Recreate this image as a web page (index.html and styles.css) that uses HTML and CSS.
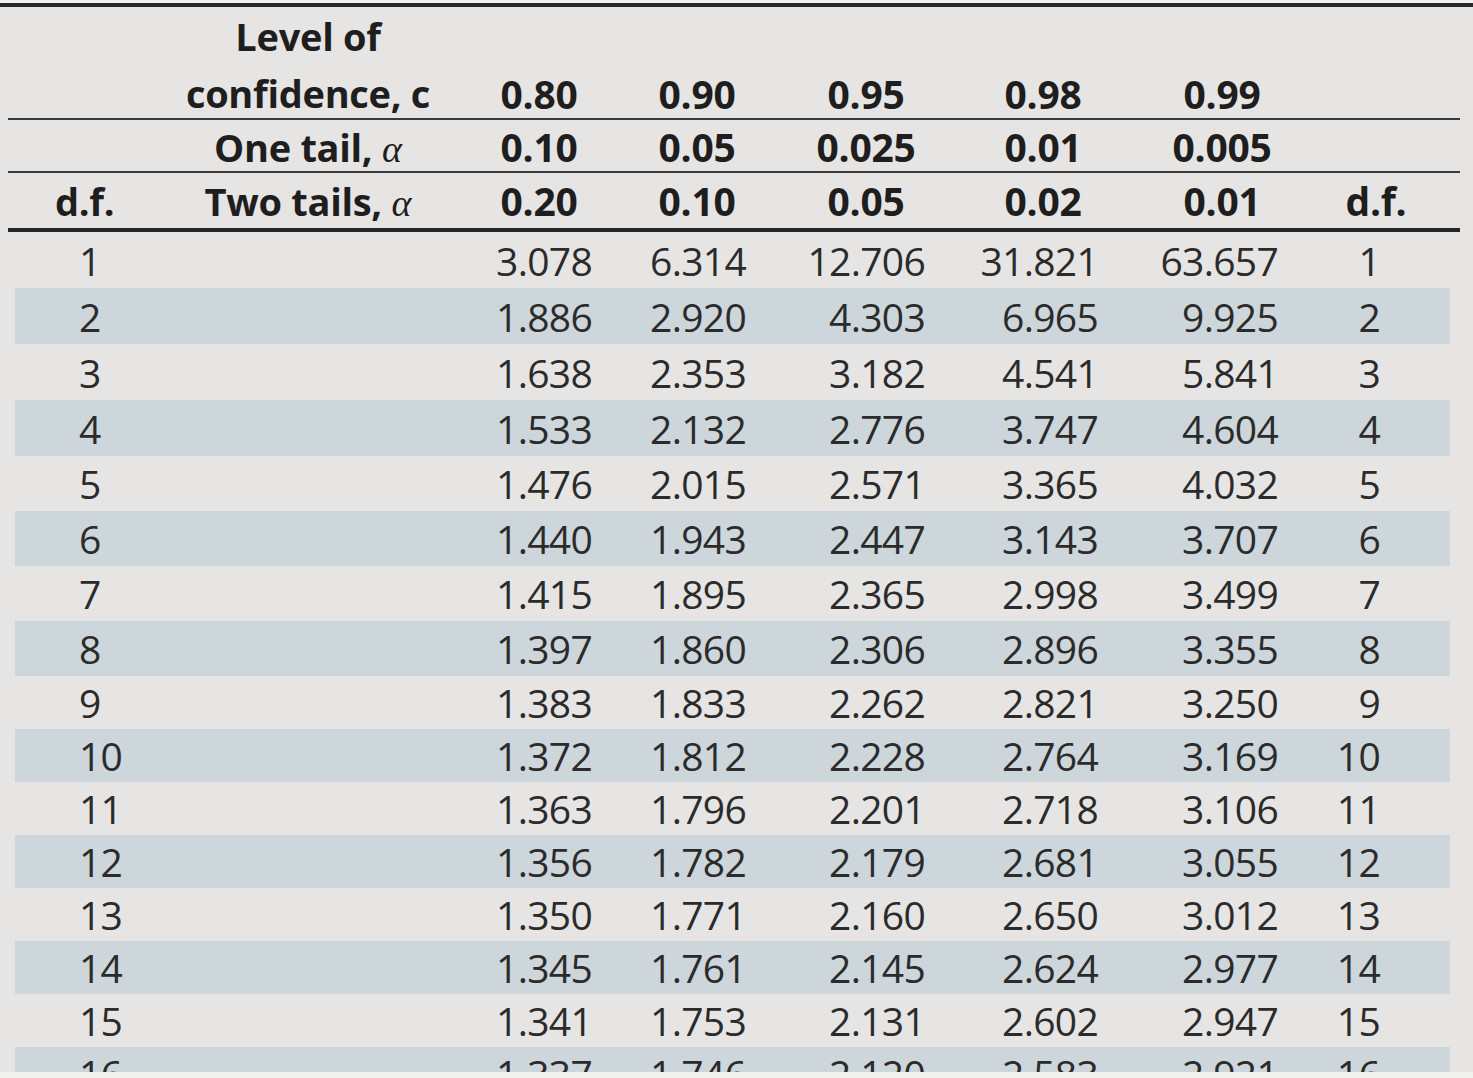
FILE: index.html
```html
<!DOCTYPE html>
<html lang="en">
<head>
<meta charset="utf-8">
<title>t-Distribution table</title>
<link rel="stylesheet" href="styles.css">
</head>
<body>
<div class="sheet">
  <div class="hrow h1">
    <div class="cell df-l"></div>
    <div class="cell label"><span>Level of<br>confidence, c</span></div>
    <div class="cell hn">0.80</div>
    <div class="cell hn">0.90</div>
    <div class="cell hn">0.95</div>
    <div class="cell hn">0.98</div>
    <div class="cell hn">0.99</div>
    <div class="cell"></div>
    <div class="cell"></div>
  </div>
  <div class="hrow h2">
    <div class="cell df-l"></div>
    <div class="cell label"><span>One tail, <span class="alpha">α</span></span></div>
    <div class="cell hn">0.10</div>
    <div class="cell hn">0.05</div>
    <div class="cell hn">0.025</div>
    <div class="cell hn">0.01</div>
    <div class="cell hn">0.005</div>
    <div class="cell"></div>
    <div class="cell"></div>
  </div>
  <div class="hrow h3">
    <div class="cell df-l hdf">d.f.</div>
    <div class="cell label"><span>Two tails, <span class="alpha">α</span></span></div>
    <div class="cell hn">0.20</div>
    <div class="cell hn">0.10</div>
    <div class="cell hn">0.05</div>
    <div class="cell hn">0.02</div>
    <div class="cell hn">0.01</div>
    <div class="cell hn">d.f.</div>
    <div class="cell"></div>
  </div>
  <div class="rows">
    <div class="row"><div class="cell dl">1</div><div class="cell"></div><div class="cell d c3">3.078</div><div class="cell d c4">6.314</div><div class="cell d c5">12.706</div><div class="cell d c6">31.821</div><div class="cell d c7">63.657</div><div class="cell dr">1</div><div class="cell"></div></div>
    <div class="row"><div class="cell dl">2</div><div class="cell"></div><div class="cell d c3">1.886</div><div class="cell d c4">2.920</div><div class="cell d c5">4.303</div><div class="cell d c6">6.965</div><div class="cell d c7">9.925</div><div class="cell dr">2</div><div class="cell"></div></div>
    <div class="row"><div class="cell dl">3</div><div class="cell"></div><div class="cell d c3">1.638</div><div class="cell d c4">2.353</div><div class="cell d c5">3.182</div><div class="cell d c6">4.541</div><div class="cell d c7">5.841</div><div class="cell dr">3</div><div class="cell"></div></div>
    <div class="row"><div class="cell dl">4</div><div class="cell"></div><div class="cell d c3">1.533</div><div class="cell d c4">2.132</div><div class="cell d c5">2.776</div><div class="cell d c6">3.747</div><div class="cell d c7">4.604</div><div class="cell dr">4</div><div class="cell"></div></div>
    <div class="row"><div class="cell dl">5</div><div class="cell"></div><div class="cell d c3">1.476</div><div class="cell d c4">2.015</div><div class="cell d c5">2.571</div><div class="cell d c6">3.365</div><div class="cell d c7">4.032</div><div class="cell dr">5</div><div class="cell"></div></div>
    <div class="row"><div class="cell dl">6</div><div class="cell"></div><div class="cell d c3">1.440</div><div class="cell d c4">1.943</div><div class="cell d c5">2.447</div><div class="cell d c6">3.143</div><div class="cell d c7">3.707</div><div class="cell dr">6</div><div class="cell"></div></div>
    <div class="row"><div class="cell dl">7</div><div class="cell"></div><div class="cell d c3">1.415</div><div class="cell d c4">1.895</div><div class="cell d c5">2.365</div><div class="cell d c6">2.998</div><div class="cell d c7">3.499</div><div class="cell dr">7</div><div class="cell"></div></div>
    <div class="row"><div class="cell dl">8</div><div class="cell"></div><div class="cell d c3">1.397</div><div class="cell d c4">1.860</div><div class="cell d c5">2.306</div><div class="cell d c6">2.896</div><div class="cell d c7">3.355</div><div class="cell dr">8</div><div class="cell"></div></div>
    <div class="row"><div class="cell dl">9</div><div class="cell"></div><div class="cell d c3">1.383</div><div class="cell d c4">1.833</div><div class="cell d c5">2.262</div><div class="cell d c6">2.821</div><div class="cell d c7">3.250</div><div class="cell dr">9</div><div class="cell"></div></div>
    <div class="row"><div class="cell dl">10</div><div class="cell"></div><div class="cell d c3">1.372</div><div class="cell d c4">1.812</div><div class="cell d c5">2.228</div><div class="cell d c6">2.764</div><div class="cell d c7">3.169</div><div class="cell dr">10</div><div class="cell"></div></div>
    <div class="row"><div class="cell dl">11</div><div class="cell"></div><div class="cell d c3">1.363</div><div class="cell d c4">1.796</div><div class="cell d c5">2.201</div><div class="cell d c6">2.718</div><div class="cell d c7">3.106</div><div class="cell dr">11</div><div class="cell"></div></div>
    <div class="row"><div class="cell dl">12</div><div class="cell"></div><div class="cell d c3">1.356</div><div class="cell d c4">1.782</div><div class="cell d c5">2.179</div><div class="cell d c6">2.681</div><div class="cell d c7">3.055</div><div class="cell dr">12</div><div class="cell"></div></div>
    <div class="row"><div class="cell dl">13</div><div class="cell"></div><div class="cell d c3">1.350</div><div class="cell d c4">1.771</div><div class="cell d c5">2.160</div><div class="cell d c6">2.650</div><div class="cell d c7">3.012</div><div class="cell dr">13</div><div class="cell"></div></div>
    <div class="row"><div class="cell dl">14</div><div class="cell"></div><div class="cell d c3">1.345</div><div class="cell d c4">1.761</div><div class="cell d c5">2.145</div><div class="cell d c6">2.624</div><div class="cell d c7">2.977</div><div class="cell dr">14</div><div class="cell"></div></div>
    <div class="row"><div class="cell dl">15</div><div class="cell"></div><div class="cell d c3">1.341</div><div class="cell d c4">1.753</div><div class="cell d c5">2.131</div><div class="cell d c6">2.602</div><div class="cell d c7">2.947</div><div class="cell dr">15</div><div class="cell"></div></div>
    <div class="row"><div class="cell dl">16</div><div class="cell"></div><div class="cell d c3">1.337</div><div class="cell d c4">1.746</div><div class="cell d c5">2.120</div><div class="cell d c6">2.583</div><div class="cell d c7">2.921</div><div class="cell dr">16</div><div class="cell"></div></div>
  </div>
</div>
</body>
</html>
```
FILE: styles.css
```css
html, body {
  margin: 0;
  padding: 0;
  background: #f1f1f0;
}
body {
  width: 1473px;
  height: 1078px;
  overflow: hidden;
  font-family: "Open Sans", "Noto Sans", sans-serif;
  color: #262626;
}
.sheet {
  margin-top: 3px;
  height: 1069px;
  box-sizing: border-box;
  overflow: hidden;
  background: #e6e5e4;
  border-top: 4px solid #2a2a2a;
  padding-left: 8px;
}
.hrow {
  width: 1452px;
  display: grid;
  grid-template-columns: 162px 276px 186px 130px 208px 146px 212px 96px 36px;
  font-weight: 700;
  font-size: 38px;
  color: #1e1e1e;
  letter-spacing: -0.3px;
}
.h1 {
  height: 111px;
  border-bottom: 2px solid #3a3a3a;
}
.h2 {
  height: 51px;
  border-bottom: 2px solid #3a3a3a;
}
.h3 {
  height: 55px;
  border-bottom: 4px solid #262626;
}
.cell {
  display: flex;
  align-items: center;
  white-space: nowrap;
}
.h1 .cell {
  align-items: flex-end;
  line-height: 57px;
  margin-bottom: -4px;
}
.label {
  justify-content: center;
  text-align: center;
}
.hn {
  justify-content: center;
  font-size: 39px;
}
.hdf {
  padding-left: 47px;
}
.alpha {
  font-family: "Liberation Serif", "DejaVu Serif", serif;
  font-style: italic;
  font-weight: 400;
  letter-spacing: 0;
}
.rows {
  width: 1435px;
  margin-left: 7px;
}
.row {
  display: grid;
  grid-template-columns: 155px 276px 186px 130px 208px 146px 212px 96px 26px;
  height: 53px;
  font-size: 39px;
  font-weight: 400;
  letter-spacing: -0.7px;
  color: #2b2b2b;
}
.row:nth-child(-n+8) {
  height: 55px;
}
.row:nth-child(-n+4) {
  height: 56px;
}
.row:nth-child(even) {
  background: #cdd6da;
}
.dl {
  padding-left: 64px;
}
.d {
  justify-content: flex-end;
}
.c3 { padding-right: 40px; }
.c4 { padding-right: 16px; }
.c5 { padding-right: 45px; }
.c6 { padding-right: 18px; }
.c7 { padding-right: 50px; }
.dr {
  justify-content: flex-end;
  padding-right: 44px;
}
```
